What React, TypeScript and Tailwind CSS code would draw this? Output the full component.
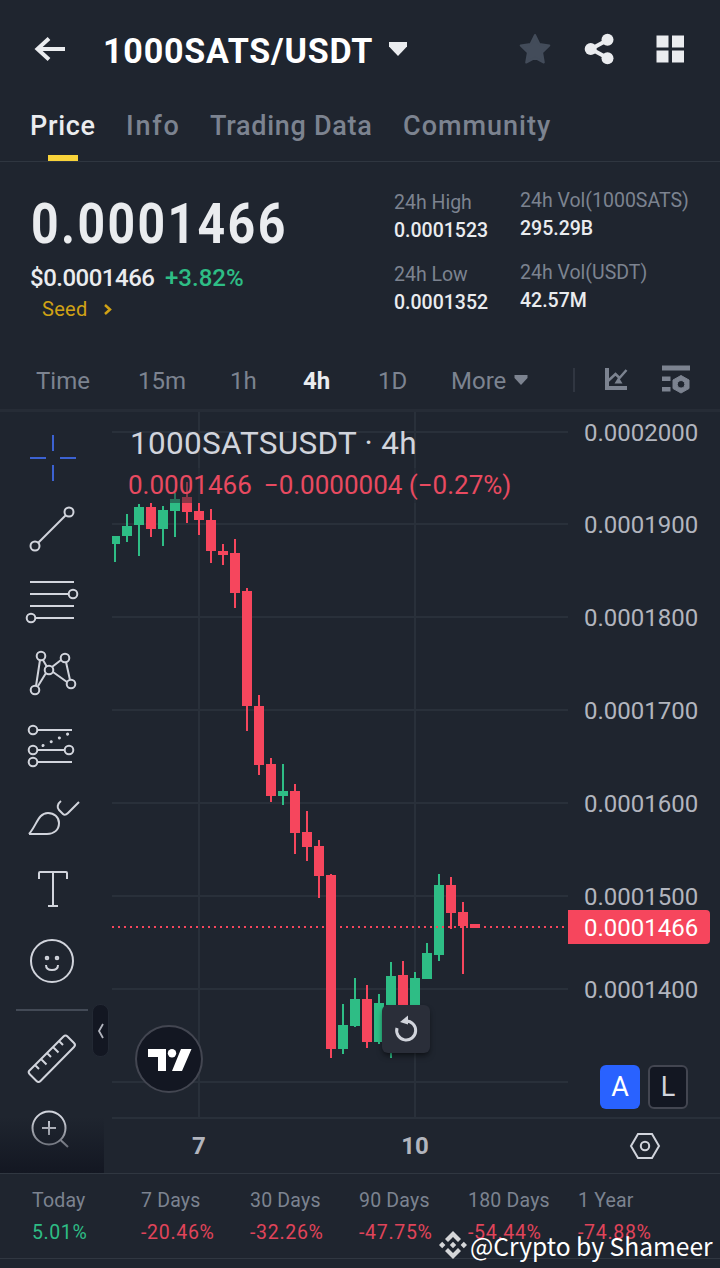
import React from "react";

type Candle = [x: number, top: number, bottom: number, high: number, low: number, up: 0 | 1];

const candles: Candle[] = [
  [115, 536, 544, 536, 562, 1],
  [127, 526, 536, 514, 542, 1],
  [139, 507, 525, 504, 556, 1],
  [151, 507, 529, 503, 537, 0],
  [163, 510, 529, 506, 546, 1],
  [175, 499, 511, 493, 537, 1],
  [187, 497, 512, 482, 523, 0],
  [199, 511, 520, 503, 535, 0],
  [211, 520, 551, 509, 563, 0],
  [223, 551, 555, 544, 565, 0],
  [235, 553, 593, 539, 608, 0],
  [247, 591, 706, 588, 731, 0],
  [259, 706, 765, 695, 775, 0],
  [271, 764, 796, 758, 802, 0],
  [283, 791, 796, 764, 805, 1],
  [295, 791, 833, 784, 854, 0],
  [307, 832, 847, 811, 861, 0],
  [319, 846, 876, 840, 898, 0],
  [331, 875, 1049, 874, 1058, 0],
  [343, 1025, 1049, 1004, 1054, 1],
  [355, 999, 1026, 978, 1027, 1],
  [367, 999, 1042, 985, 1048, 0],
  [379, 1003, 1042, 994, 1044, 1],
  [391, 976, 1005, 962, 1058, 1],
  [403, 975, 1005, 961, 1012, 0],
  [415, 978, 1005, 972, 1005, 1],
  [427, 953, 979, 943, 979, 1],
  [439, 885, 955, 874, 961, 1],
  [451, 885, 913, 877, 929, 0],
  [463, 912, 926, 902, 974, 0],
  [475, 924, 928, 924, 928, 0],
];

const gridRows = [432, 524, 617, 710, 803, 896, 989, 1082];
const prices = ["0.0002000", "0.0001900", "0.0001800", "0.0001700", "0.0001600", "0.0001500", "0.0001400"];

function Header() {
  return (
    <header className="flex h-[98px] items-center pl-[30px]">
      <svg className="h-10 w-10 shrink-0" viewBox="30 29 40 40" fill="none" stroke="#eaecef" strokeWidth="4">
        <path d="M65 49H38M49 38.5L37.5 49L49 59.5" />
      </svg>
      <h1 className="ml-[33px] w-[270px] origin-left scale-x-[0.96] pt-[3px] text-[35.500px] leading-10 font-bold tracking-[0.8px] whitespace-nowrap text-white">1000SATS/USDT</h1>
      <svg className="ml-[13px] h-5 w-6 shrink-0" viewBox="386 39 24 20" fill="#eaecef">
        <path d="M389 42h18v4.500l-9 9.500l-9-9.500z" />
      </svg>
      <svg className="ml-[105px] h-10 w-10 shrink-0" viewBox="515 29 40 40" fill="#434c5a" stroke="#434c5a" strokeWidth="2" strokeLinejoin="round">
        <path d="M535 35l4.400 9 9.900 1.500-7.200 7 1.700 10-8.800-4.700-8.800 4.700 1.700-10-7.200-7 9.900-1.500z" />
      </svg>
      <svg className="ml-[25px] h-10 w-10 shrink-0" viewBox="580 29 40 40" fill="#eaecef">
        <path d="M607.500 40L591 49L607.500 58" fill="none" stroke="#eaecef" strokeWidth="4" />
        <circle cx="590.700" cy="49" r="6" /><circle cx="607.500" cy="39.800" r="6" /><circle cx="607.500" cy="58.200" r="6" />
      </svg>
      <svg className="ml-[30px] h-10 w-10 shrink-0" viewBox="650 29 40 40" fill="#eaecef">
        <path d="M656.500 35.500h12v12h-12zM672 35.500h12v12h-12zM656.500 50.500h12v12h-12zM672 50.500h12v12h-12z" />
      </svg>
    </header>
  );
}

function Tabs() {
  return (
    <nav className="flex h-16 border-b border-[#2f3640] pl-[30px] text-[27px] leading-[57px] font-medium tracking-[0.7px] whitespace-nowrap text-[#7c8390]">
      <div className="relative w-24 text-[#eaecef]">
        Price
        <span className="absolute bottom-0 left-[18px] h-[6px] w-[30px] bg-[#f8d33a]" />
      </div>
      <div className="w-[84px] tracking-[1.8px]">Info</div>
      <div className="w-[193px]">Trading Data</div>
      <div className="tracking-[1px]">Community</div>
    </nav>
  );
}

function Stat({ label, value }: { label: string; value: string }) {
  return (
    <div className="h-[72px] whitespace-nowrap">
      <div className="text-[19.500px] leading-7 text-[#7c8390]">{label}</div>
      <div className="text-[19.500px] leading-7 font-medium text-[#eaecef]">{value}</div>
    </div>
  );
}

function Summary() {
  return (
    <section className="flex h-[188px] pl-[31px]">
      <div className="w-[363px] whitespace-nowrap">
        <div className="mt-7 h-[68px] origin-left scale-x-[0.86] text-[56px] leading-[68px] font-bold tracking-[2.800px] text-[#eaecef]">0.0001466</div>
        <div className="mt-1 -ml-px flex h-8 text-[24px] leading-8 font-medium tracking-[-0.5px]">
          <span className="w-[134px] text-[#eaecef]">$0.0001466</span>
          <span className="ml-px tracking-[0px] text-[#2ebd85]">+3.82%</span>
        </div>
        <div className="flex items-center pl-[11px] text-[20px] leading-[30px] tracking-[0.3px] text-[#d0a215]">
          <span className="w-[60px]">Seed</span>
          <svg className="h-4 w-3" viewBox="0 0 12 16" fill="none" stroke="#d0a215" strokeWidth="2.500"><path d="M3 4l5 4.500L3 13" /></svg>
        </div>
      </div>
      <div className="w-[126px] pt-[27px]">
        <Stat label="24h High" value="0.0001523" />
        <Stat label="24h Low" value="0.0001352" />
      </div>
      <div className="pt-[25px]">
        <Stat label="24h Vol(1000SATS)" value="295.29B" />
        <Stat label="24h Vol(USDT)" value="42.57M" />
      </div>
    </section>
  );
}

function Intervals() {
  return (
    <div className="flex h-[62px] items-center border-b-[3px] border-[#262c36] pl-9 text-[24px] leading-8 whitespace-nowrap text-[#7c8390]">
      <span className="w-[102px] pt-[2px]">Time</span>
      <span className="w-[92px] pt-[2px]">15m</span>
      <span className="w-[73px] pt-[2px]">1h</span>
      <span className="w-[75px] pt-[2px] font-bold text-[#eaecef]">4h</span>
      <span className="w-[73px] pt-[2px]">1D</span>
      <span className="w-[62px] pt-[2px]">More</span>
      <svg className="h-3 w-4" viewBox="513 373 16 12" fill="#7c8390"><path d="M514.500 374h13v3l-6.500 7-6.500-7z" /></svg>
      <span className="ml-11 h-6 w-[2px] bg-[#303641]" />
      <svg className="ml-[26px] h-8 w-8" viewBox="601 364 32 32" fill="#7c8390">
        <path d="M605 368h4v18h18v4h-22zM614.500 383.500l4-6.500 4 6.500z" />
        <path d="M608 381l7.500-7 4 4 7-8" fill="none" stroke="#7c8390" strokeWidth="2.500" />
      </svg>
      <svg className="ml-6 h-8 w-9" viewBox="657 364 36 32" fill="#7c8390">
        <path d="M662 365.500h28v5h-28zM662 376.500h8.500v4.500h-8.500zM662 387h8.500v4.500h-8.500z" />
        <path fillRule="evenodd" stroke="#7c8390" strokeLinejoin="round" d="M681 375.500l8 4.500v8.500l-8 4.500-8-4.500v-8.500zM681 380.500a3.800 3.800 0 1 0 .1 0z" />
      </svg>
    </div>
  );
}

function Tool({ box, children, color = "#d1d4dc" }: { box: string; children: React.ReactNode; color?: string }) {
  return (
    <svg className="h-[72px] w-[104px] shrink-0" viewBox={box} fill="none" stroke={color} strokeWidth="2">
      {children}
    </svg>
  );
}

function Toolbar() {
  return (
    <aside className="relative flex w-[104px] flex-col pt-[10px]">
      <Tool box="0 422 104 72" color="#3c62d2">
        <path d="M53 435v16M53 465v16M30 458h16M60 458h16" />
      </Tool>
      <Tool box="0 494 104 72">
        <path d="M38 543L66 515" /><circle cx="35" cy="546" r="4.500" /><circle cx="69" cy="512" r="4.500" />
      </Tool>
      <Tool box="0 566 104 72">
        <path d="M30 582h44M30 594h38M30 606h44M36 618h38" /><circle cx="73" cy="594" r="4.300" /><circle cx="31" cy="618" r="4.300" />
      </Tool>
      <Tool box="0 638 104 72">
        <path d="M36 686L40 660M38 686L46 673M43 660L47 667M52 667L61 660M66 662L70 680M53 672L67 682" />
        <circle cx="41" cy="656" r="4.300" /><circle cx="65" cy="658" r="4.300" /><circle cx="49" cy="670" r="4.300" /><circle cx="35" cy="690" r="4.300" /><circle cx="71" cy="684" r="4.300" />
      </Tool>
      <Tool box="0 710 104 72">
        <path d="M37 730h35M37 750h28M37 762h35" /><circle cx="33" cy="730" r="4.300" /><circle cx="33" cy="750" r="4.300" /><circle cx="69" cy="750" r="4.300" /><circle cx="33" cy="762" r="4.300" />
        <path d="M43 745.500L68 734" strokeWidth="3" strokeLinecap="round" strokeDasharray="0.100 8.900" />
      </Tool>
      <Tool box="0 782 104 72">
        <path strokeLinejoin="round" d="M29 834C37 825 38 813 48 813C54 813 59 817 59 823C59 830 54 834 47 834H29" />
        <path d="M61 801C57 804 57 808 59 810L63 814Q65 816 68 813L79 802" />
      </Tool>
      <Tool box="0 854 104 72">
        <path d="M39 879V873Q39 872 40 872H66Q67 872 67 873V879M53 872V906M48 906h10" />
      </Tool>
      <Tool box="0 926 104 72">
        <circle cx="52" cy="961" r="21" /><circle cx="47" cy="958" r="1.300" /><circle cx="57" cy="958" r="1.300" /><path d="M46 965q0 5 6 5t6-5" />
      </Tool>
      <div className="mt-[11px] ml-4 h-[2px] w-[72px] shrink-0 bg-[#434a56]" />
      <div className="mt-3 flex flex-col">
        <Tool box="0 1023 104 72">
          <path d="M29 1071L63.500 1036.500Q65.500 1034.500 67.500 1036.500L74 1043Q76 1045 74 1047L40.500 1081Q38.500 1083 36.500 1081L30 1074.500Q28 1072.500 29 1071zM35 1065l4 4M41 1059l5.500 5.500M47 1053l4 4M53 1047l5.500 5.500M59 1041l4 4" />
        </Tool>
        <Tool box="0 1095 104 72">
          <circle cx="49" cy="1128" r="16.500" /><path d="M42 1128h14M49 1121v14M60.500 1140l7.500 7" />
        </Tool>
      </div>
      <div className="absolute bottom-0 left-0 h-14 w-[104px] bg-linear-to-b from-[#131722]/0 to-[#131722]" />
      <div className="absolute top-[592px] left-[92px] z-10 flex h-[53px] w-[17px] items-center justify-center rounded-lg border border-[#232934] bg-[#131722]">
        <svg className="h-4 w-2" viewBox="0 0 8 16" fill="none" stroke="#b2b5be" strokeWidth="1.800"><path d="M6 1L2 8l4 7" /></svg>
      </div>
    </aside>
  );
}

function Plot() {
  return (
    <div className="relative ml-2 w-[456px]">
      <svg className="h-[761px] w-[456px]" viewBox="112 412 456 761">
        <g fill="#29303a">
          {gridRows.map((y) => <rect key={y} x="112" y={y - 1} width="456" height="2" />)}
          <rect x="112" y="1117" width="456" height="2" />
          <rect x="198" y="412" width="2" height="705" />
          <rect x="414" y="412" width="2" height="705" />
        </g>
        {candles.map(([x, top, bottom, high, low, up]) => (
          <g key={x} fill={up ? "#2ebd85" : "#f6465d"}>
            <rect x={x - 1} y={high} width="2" height={low - high} />
            <rect x={Math.max(x - 5, 112)} y={top} width={x === 115 ? 8 : 10} height={bottom - top} />
          </g>
        ))}
        <path d="M112 927H568" stroke="#f6465d" strokeWidth="2" strokeDasharray="2 4" />
        <rect x="120" y="468" width="398" height="35" fill="#1f252f" fillOpacity="0.5" />
        <circle cx="169" cy="1059" r="33" fill="#131722" stroke="#434651" strokeWidth="2" />
        <path d="M148 1049h18v22h-8v-14h-10zM181 1049h10.500l-9.500 22h-10z" fill="#fff" />
        <circle cx="172" cy="1053.300" r="4.200" fill="#fff" />
      </svg>
      <div className="absolute top-[14px] left-[18px] text-[31.500px] leading-9 tracking-[0.300px] whitespace-nowrap text-[#d1d4dc]">1000SATSUSDT · 4h</div>
      <div className="absolute top-[58px] left-4 text-[26px] leading-[30px] whitespace-pre text-[#e84a60]">
        <span className="mr-3">0.0001466</span>−0.0000004 (−0.27%)
      </div>
      <div className="absolute top-[593px] left-[270px] flex h-12 w-12 items-center justify-center rounded-md bg-[#2a2e39] shadow-md shadow-black/40">
        <svg className="h-8 w-8" viewBox="390 1013 32 32" fill="none" stroke="#d1d4dc" strokeWidth="3">
          <path d="M397 1028a9.500 9.500 0 1 0 9-7" /><path d="M400 1022l8-6.500v9z" fill="#d1d4dc" stroke="none" />
        </svg>
      </div>
      <div className="absolute bottom-[11px] left-0 grid w-full grid-cols-[174px_258px] text-center text-[24px] leading-8 font-bold text-[#b2b5be]">
        <span>7</span>
        <span>10</span>
      </div>
    </div>
  );
}

function PriceAxis() {
  return (
    <div className="relative flex w-[152px] flex-col text-[24px] text-[#b2b5be]">
      <div className="-mt-[25.500px] pl-4">
        {prices.map((p) => <div key={p} className="h-[92.850px] leading-[92.850px]">{p}</div>)}
      </div>
      <div className="absolute top-[498px] left-0 h-[34px] w-[142px] rounded-r-[4px] bg-[#f6465d] pl-4 leading-[36px] text-white">0.0001466</div>
      <div className="mt-[28.500px] flex h-[52px] gap-2 pl-8 text-[27px] leading-[44px]">
        <span className="h-11 w-10 rounded-md bg-[#2962ff] text-center text-white">A</span>
        <span className="h-11 w-10 rounded-md border-2 border-[#434651] bg-[#131722] text-center leading-10 text-[#d1d4dc]">L</span>
      </div>
      <div className="flex flex-1 justify-center border-t-2 border-[#29303a] pt-[11px] pl-[2px]">
        <svg className="h-8 w-8" viewBox="629 1130 32 32" fill="none" stroke="#d1d4dc" strokeWidth="2">
          <path d="M638 1134h14l7 12-7 12h-14l-7-12z" /><circle cx="645" cy="1146" r="4.200" />
        </svg>
      </div>
    </div>
  );
}

const returns = [
  ["Today", "5.01%"],
  ["7 Days", "-20.46%"],
  ["30 Days", "-32.26%"],
  ["90 Days", "-47.75%"],
  ["180 Days", "-54.44%"],
  ["1 Year", "-74.88%"],
];

function Performance() {
  return (
    <footer className="relative h-[95px] border-t border-[#303741]">
      <div className="grid h-[85px] grid-cols-[109px_109px_109px_109px_110px_100px] border-b border-[#303741] pt-[11px] pl-8 text-[19.500px] leading-8 whitespace-nowrap">
        {returns.map(([label, value], i) => (
          <div key={label}>
            <div className="tracking-[0.2px] text-[#7c8390]">{label}</div>
            <div className={i === 0 ? "tracking-[0.6px] text-[#2ebd85]" : "tracking-[0.7px] text-[#e0445a]"}>{value}</div>
          </div>
        ))}
      </div>
      <div className="absolute top-[53px] left-[439px] flex items-center gap-[3px] font-['Noto_Sans_CJK_SC','Noto_Sans',sans-serif] text-[24.600px] leading-9 whitespace-nowrap text-white">
        <svg className="h-7 w-7" viewBox="0 0 28 28" fill="#d5d6d8">
          <path d="M14 0L22 8L19 11L14 6L9 11L6 8zM14 28L22 20L19 17L14 22L9 17L6 20zM14 10.800L17.200 14L14 17.200L10.800 14zM3.200 10.800L6.400 14L3.200 17.200L0 14zM24.800 10.800L28 14L24.800 17.200L21.600 14z" />
        </svg>
        <span>@Crypto by Shameer</span>
      </div>
    </footer>
  );
}

export default function App() {
  return (
    <main className="h-[1268px] w-[720px] overflow-hidden bg-[#1f252f] font-[Roboto,sans-serif]">
      <Header />
      <Tabs />
      <Summary />
      <Intervals />
      <section className="flex h-[761px]">
        <Toolbar />
        <Plot />
        <PriceAxis />
      </section>
      <Performance />
    </main>
  );
}
